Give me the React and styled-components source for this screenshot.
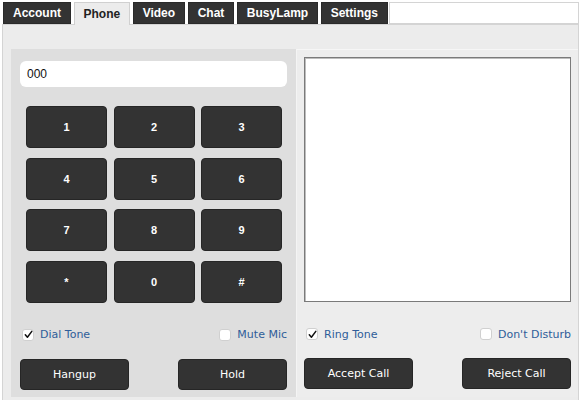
import React, { useState } from "react";
import styled, { createGlobalStyle } from "styled-components";

const GlobalStyle = createGlobalStyle`
  html, body {
    margin: 0;
    padding: 0;
    background: #ffffff;
  }
  body {
    font-family: "Liberation Sans", Arial, sans-serif;
  }
`;

const Page = styled.div`
  width: 581px;
  height: 400px;
  display: flex;
  flex-direction: column;
  overflow: hidden;
`;

const TabBar = styled.div`
  display: flex;
  align-items: flex-end;
  gap: 2.5px;
  height: 24px;
  padding: 2px 2px 0 3px;
  box-sizing: border-box;
  position: relative;
  z-index: 1;
`;

const Tab = styled.div`
  box-sizing: border-box;
  padding: 0 9px;
  display: flex;
  align-items: center;
  font-size: 12px;
  font-weight: bold;
  color: ${(p) => (p.$active ? "#222" : "#fff")};
  background: ${(p) => (p.$active ? "#ececec" : "#333")};
  border: 1px solid ${(p) => (p.$active ? "#d0d0d0" : "#2a2a2a")};
  border-bottom: ${(p) => (p.$active ? "none" : "1px solid #2a2a2a")};
  margin-bottom: ${(p) => (p.$active ? "-1px" : "0")};
  height: ${(p) => (p.$active ? "23px" : "22px")};
  cursor: pointer;
`;

const TabFiller = styled.div`
  flex: 1;
  height: 22px;
  margin-left: -2px;
  box-sizing: border-box;
  background: #fff;
  border: 1px solid #d4d4d4;
`;

const Content = styled.div`
  flex: 1;
  margin: 0 2px;
  background: #ececec;
  border: 1px solid #d4d4d4;
  border-bottom: none;
  padding: 24px 0 3px 8px;
  display: flex;
`;

const LeftPanel = styled.div`
  width: 285px;
  background: #dedede;
  padding: 12px 9px 0;
  box-sizing: border-box;
  display: flex;
  flex-direction: column;
`;

const RightPanel = styled.div`
  flex: 1;
  background: #ededed;
  border-top: 1px solid #f6f6f6;
  border-left: 1px solid #f4f4f4;
  padding: 7px 7px 0 7px;
  display: flex;
  flex-direction: column;
`;

const NumberInput = styled.input`
  height: 26px;
  box-sizing: border-box;
  border: none;
  border-radius: 6px;
  background: #fff;
  padding: 0 7px;
  font-family: "Liberation Sans", Arial, sans-serif;
  font-size: 12px;
  color: #111;
  outline: none;
`;

const Keypad = styled.div`
  display: grid;
  grid-template-columns: repeat(3, 81px);
  grid-auto-rows: 42px;
  column-gap: 6.5px;
  row-gap: 9.5px;
  margin: 19px 0 0 6px;
`;

const Key = styled.button`
  background: #333;
  border: 1px solid #262626;
  border-radius: 4px;
  color: #fff;
  font-family: "Liberation Sans", Arial, sans-serif;
  font-weight: bold;
  font-size: 11px;
  padding: 0;
  cursor: pointer;
`;

const Display = styled.div`
  height: 245px;
  box-sizing: border-box;
  background: #fff;
  border: 1px solid #7a7a7a;
  box-shadow: inset 1px 1px 0 #bdbdbd;
`;

const OptionsRow = styled.div`
  display: flex;
  justify-content: space-between;
  align-items: center;
  height: 16px;
  margin-top: 24px;
  padding-left: 2px;
`;

const Option = styled.label`
  display: flex;
  align-items: center;
  gap: 6px;
  font-family: "DejaVu Sans", Verdana, sans-serif;
  font-size: 11px;
  color: #2f5d99;
  cursor: pointer;
`;

const Box = styled.span`
  width: 12px;
  height: 12px;
  box-sizing: border-box;
  background: #fff;
  border: 1px solid #d0d0d0;
  border-radius: 3px;
  display: flex;
  align-items: center;
  justify-content: center;
`;

const ButtonRow = styled.div`
  display: flex;
  justify-content: space-between;
  margin-top: 16px;
`;

const ActionButton = styled.button`
  width: 109px;
  height: 31px;
  background: #333;
  border: 1px solid #262626;
  border-radius: 4px;
  color: #fff;
  font-family: "DejaVu Sans", Verdana, sans-serif;
  font-size: 11px;
  padding: 0;
  cursor: pointer;
`;

const Checkbox = ({ label, checked, onToggle }) => (
  <Option onClick={onToggle}>
    <Box>
      {checked && (
        <svg width="9" height="9" viewBox="0 0 9 9">
          <path
            d="M1.3 4.8 L3.4 7.2 L7.8 1.4"
            fill="none"
            stroke="#111"
            strokeWidth="1.5"
            strokeLinecap="round"
            strokeLinejoin="round"
          />
        </svg>
      )}
    </Box>
    {label}
  </Option>
);

const tabs = ["Account", "Phone", "Video", "Chat", "BusyLamp", "Settings"];
const keys = ["1", "2", "3", "4", "5", "6", "7", "8", "9", "*", "0", "#"];

const App = () => {
  const [activeTab, setActiveTab] = useState("Phone");
  const [number, setNumber] = useState("000");
  const [opts, setOpts] = useState({
    dialTone: true,
    muteMic: false,
    ringTone: true,
    dontDisturb: false,
  });

  const toggle = (name) => setOpts({ ...opts, [name]: !opts[name] });

  return (
    <Page>
      <GlobalStyle />
      <TabBar>
        {tabs.map((t) => (
          <Tab key={t} $active={t === activeTab} onClick={() => setActiveTab(t)}>
            {t}
          </Tab>
        ))}
        <TabFiller />
      </TabBar>
      <Content>
        <LeftPanel>
          <NumberInput value={number} onChange={(e) => setNumber(e.target.value)} />
          <Keypad>
            {keys.map((k) => (
              <Key key={k} onClick={() => setNumber(number + k)}>
                {k}
              </Key>
            ))}
          </Keypad>
          <OptionsRow>
            <Checkbox label="Dial Tone" checked={opts.dialTone} onToggle={() => toggle("dialTone")} />
            <Checkbox label="Mute Mic" checked={opts.muteMic} onToggle={() => toggle("muteMic")} />
          </OptionsRow>
          <ButtonRow>
            <ActionButton>Hangup</ActionButton>
            <ActionButton>Hold</ActionButton>
          </ButtonRow>
        </LeftPanel>
        <RightPanel>
          <Display />
          <OptionsRow>
            <Checkbox label="Ring Tone" checked={opts.ringTone} onToggle={() => toggle("ringTone")} />
            <Checkbox label="Don't Disturb" checked={opts.dontDisturb} onToggle={() => toggle("dontDisturb")} />
          </OptionsRow>
          <ButtonRow>
            <ActionButton>Accept Call</ActionButton>
            <ActionButton>Reject Call</ActionButton>
          </ButtonRow>
        </RightPanel>
      </Content>
    </Page>
  );
};

export default App;
